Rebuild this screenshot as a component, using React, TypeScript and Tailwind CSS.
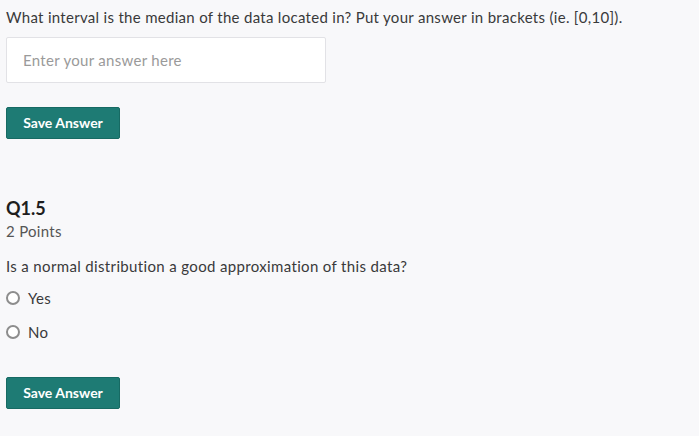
export default function App() {
  const font = { fontFamily: "Lato, 'Open Sans', sans-serif" };
  return (
    <div className="min-h-[436px] bg-[#f8f8fa] pl-[6px] pt-[8px] text-[#3a3a3a]" style={font}>
      <p className="text-[15px] leading-[18px] tracking-[0.3px]">
        What interval is the median of the data located in? Put your answer in brackets (ie. [0,10]).
      </p>
      <div className="mt-[11px] flex h-[46px] w-[320px] items-center rounded-[2px] border border-[#e2e2e6] bg-white px-[16px]">
        <span className="text-[15px] tracking-[0.3px] text-[#9a9a9a]">Enter your answer here</span>
      </div>
      <button className="mt-[24px] flex h-[32px] w-[114px] items-center justify-center rounded-[2px] border border-[#176a63] bg-[#1e7b74] pb-[2px] text-[14px] font-bold text-white">
        Save Answer
      </button>
      <div className="mt-[58px] text-[18px] font-bold leading-[22px] text-[#1e1e1e]">Q1.5</div>
      <div className="mt-[3px] text-[15px] leading-[18px] tracking-[0.3px] text-[#555]">2 Points</div>
      <p className="mt-[17px] text-[15px] leading-[18px] tracking-[0.35px]">Is a normal distribution a good approximation of this data?</p>
      <div className="mt-[14px] flex items-center gap-[8px]">
        <span className="h-[14px] w-[14px] rounded-full border-2 border-[#8d8d8d] bg-white" />
        <span className="text-[15px] leading-[18px] tracking-[0.3px]">Yes</span>
      </div>
      <div className="mt-[16px] flex items-center gap-[8px]">
        <span className="h-[14px] w-[14px] rounded-full border-2 border-[#8d8d8d] bg-white" />
        <span className="text-[15px] leading-[18px] tracking-[0.3px]">No</span>
      </div>
      <button className="mt-[36px] flex h-[32px] w-[114px] items-center justify-center rounded-[2px] border border-[#176a63] bg-[#1e7b74] pb-[2px] text-[14px] font-bold text-white">
        Save Answer
      </button>
    </div>
  );
}
